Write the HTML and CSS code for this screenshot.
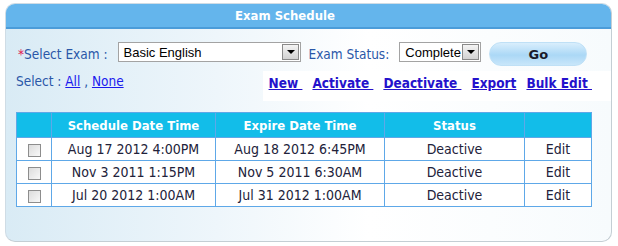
FILE: index.html
```html
<!DOCTYPE html>
<html lang="en">
<head>
    <meta charset="UTF-8">
    <title>Exam Schedule</title>
    <link rel="stylesheet" href="styles.css">
</head>
<body>
    <div class="panel">
        <div class="panel-head">
            <div class="panel-title">Exam Schedule</div>
        </div>

        <div class="panel-body">
            <div class="filters">
                <span class="label"><span class="req">*</span>Select Exam :</span>
                <div class="select select-exam">
                    <span class="select-text">Basic English</span>
                    <span class="select-arrow"></span>
                </div>
                <span class="label status-label">Exam Status:</span>
                <div class="select select-status">
                    <span class="select-text">Complete</span>
                    <span class="select-arrow"></span>
                </div>
                <button class="go-btn">Go</button>
            </div>

            <div class="toolbar">
                <div class="select-links">
                    Select : <a href="#">All</a> , <a href="#">None</a>
                </div>
                <div class="actions">
                    <a href="#">New&nbsp;</a>
                    <a href="#">Activate&nbsp;</a>
                    <a href="#">Deactivate&nbsp;</a>
                    <a href="#">Export</a>
                    <a href="#">Bulk Edit&nbsp;</a>
                </div>
            </div>

            <table class="schedule">
                <colgroup>
                    <col style="width:35px">
                    <col style="width:164px">
                    <col style="width:169px">
                    <col style="width:140px">
                    <col style="width:67px">
                </colgroup>
                <thead>
                    <tr>
                        <th></th>
                        <th>Schedule Date Time</th>
                        <th>Expire Date Time</th>
                        <th>Status</th>
                        <th></th>
                    </tr>
                </thead>
                <tbody>
                    <tr>
                        <td><span class="check"></span></td>
                        <td>Aug 17 2012 4:00PM</td>
                        <td>Aug 18 2012 6:45PM</td>
                        <td>Deactive</td>
                        <td>Edit</td>
                    </tr>
                    <tr>
                        <td><span class="check"></span></td>
                        <td>Nov 3 2011 1:15PM</td>
                        <td>Nov 5 2011 6:30AM</td>
                        <td>Deactive</td>
                        <td>Edit</td>
                    </tr>
                    <tr>
                        <td><span class="check"></span></td>
                        <td>Jul 20 2012 1:00AM</td>
                        <td>Jul 31 2012 1:00AM</td>
                        <td>Deactive</td>
                        <td>Edit</td>
                    </tr>
                </tbody>
            </table>
        </div>
    </div>
</body>
</html>
```

FILE: styles.css
```css
body {
    margin: 0;
    padding: 3px 6px 0 5px;
    background: #ffffff;
    font-family: "DejaVu Sans Condensed", "DejaVu Sans", sans-serif;
    font-size: 13.5px;
}
.panel {
    width: 605px;
    height: 237px;
    border: 1px solid #cfdce5;
    border-right-color: #c4ced4;
    border-bottom-color: #c4ced4;
    border-radius: 10px;
    overflow: hidden;
    background: linear-gradient(to right, #d9ebf5 0%, #eef6fb 35%, #ffffff 60%, #f7fbfd 100%);
}
.panel-head {
    height: 23px;
    background: #64b5ec;
    border-bottom: 2px solid #4b9cd9;
    display: flex;
    align-items: center;
    padding-left: 229px;
}
.panel-title {
    color: #ffffff;
    font-weight: bold;
    font-size: 13px;
}
.panel-body {
    padding: 13px 0 0 10px;
}
.filters {
    display: flex;
    align-items: center;
    height: 24px;
    padding-left: 2px;
}
.label {
    color: #2a57a8;
    font-size: 13.5px;
}
.req {
    color: #e2224f;
}
.select {
    display: flex;
    align-items: center;
    box-sizing: border-box;
    height: 20px;
    border: 1px solid #a3a3a3;
    background: #ffffff;
    padding: 0 1px 0 5px;
    margin-top: -4px;
}
.select-text {
    flex: 1;
    color: #000000;
    font-family: "Liberation Sans", Arial, sans-serif;
    font-size: 13px;
    white-space: nowrap;
}
.select-arrow {
    width: 17px;
    height: 16px;
    border: 1px solid #8a8a8a;
    box-sizing: border-box;
    background: linear-gradient(#f4f4f4, #d2d2d2);
    position: relative;
}
.select-arrow::after {
    content: "";
    position: absolute;
    left: 4px;
    top: 5px;
    border-left: 4px solid transparent;
    border-right: 4px solid transparent;
    border-top: 4px solid #000000;
}
.select-exam {
    width: 183px;
    margin-left: 10px;
}
.status-label {
    margin-left: 8px;
}
.select-status {
    width: 82px;
    margin-left: 10px;
}
.go-btn {
    margin-left: 8px;
    width: 98px;
    height: 24px;
    border: 1px solid #bfe0f6;
    border-radius: 12px;
    background: linear-gradient(#d9eefc 0%, #abd8f6 55%, #c8e6fa 100%);
    font-family: "DejaVu Sans", sans-serif;
    font-weight: bold;
    font-size: 13px;
    color: #1b1b2b;
    padding: 0;
}
.toolbar {
    display: flex;
    justify-content: space-between;
    margin-top: 5px;
    height: 30px;
}
.select-links {
    color: #2a57a8;
    font-size: 13.5px;
    margin-top: 2px;
}
.select-links a {
    color: #1a1aee;
}
.actions {
    display: flex;
    gap: 10px;
    padding: 4px 19px 0 6px;
    background: #ffffff;
}
.actions a {
    color: #2412cc;
    font-weight: bold;
    font-size: 13.5px;
}
.schedule {
    margin-top: 11px;
    width: 575px;
    table-layout: fixed;
    border-collapse: collapse;
    background: #ffffff;
}
.schedule th,
.schedule td {
    border: 1px solid #5ea8e8;
    text-align: center;
    padding: 0;
}
.schedule th {
    background: #12bde9;
    color: #ffffff;
    font-weight: bold;
    font-size: 13px;
    height: 24px;
}
.schedule td {
    height: 22px;
    font-size: 14px;
    color: #22223a;
}
.check {
    display: inline-block;
    width: 11px;
    height: 11px;
    border: 1px solid #8d8d8d;
    background: linear-gradient(135deg, #dcdcdc, #f8f8f8);
    vertical-align: middle;
}
```
